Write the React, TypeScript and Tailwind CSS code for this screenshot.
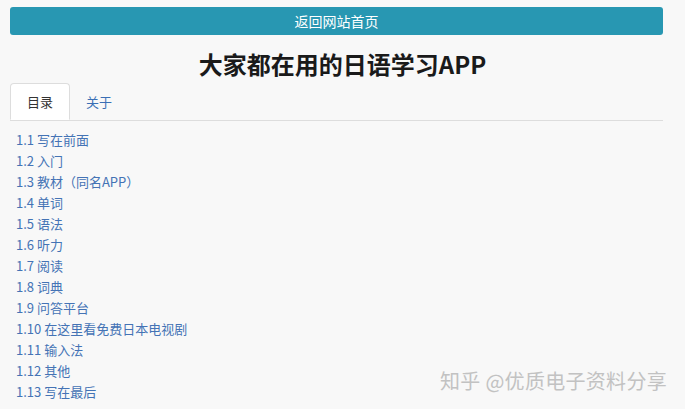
import React from "react";

const items = [
  "1.1 写在前面",
  "1.2 入门",
  "1.3 教材（同名APP）",
  "1.4 单词",
  "1.5 语法",
  "1.6 听力",
  "1.7 阅读",
  "1.8 词典",
  "1.9 问答平台",
  "1.10 在这里看免费日本电视剧",
  "1.11 输入法",
  "1.12 其他",
  "1.13 写在最后",
];

export default function App() {
  return (
    <div
      className="relative w-[685px] h-[409px] overflow-hidden bg-[#f8f8f8] px-[10px] pt-[7px]"
      style={{ fontFamily: '"Microsoft YaHei", "Noto Sans CJK SC", sans-serif' }}
    >
      {/* back button */}
      <div className="w-[653px] h-[28px] rounded-[3px] bg-[#2897b2] flex items-center justify-center text-white text-[14px]">
        返回网站首页
      </div>

      <h1 className="mt-[12px] text-center text-[24px] leading-[34px] font-bold text-[#1a1a1a]">
        大家都在用的日语学习APP
      </h1>

      {/* tabs */}
      <div className="mt-[2px] w-[653px] flex border-b border-[#dddddd]">
        <div className="h-[37px] -mb-px px-[16px] flex items-center bg-white border border-[#dddddd] border-b-white rounded-t-[4px] text-[13px] text-[#333]">
          目录
        </div>
        <div className="h-[37px] px-[16px] flex items-center text-[13px] text-[#3a6fb5]">
          关于
        </div>
      </div>

      <ul className="pt-[8px] pl-[6px]">
        {items.map((t) => (
          <li key={t} className="text-[13px] leading-[21px] text-[#4473b5]">
            {t}
          </li>
        ))}
      </ul>

      <div className="absolute left-[440px] top-[368px] text-[20px] leading-[26px] text-[#c2c2c2] tracking-[0.3px]">
        知乎 @优质电子资料分享
      </div>
    </div>
  );
}
